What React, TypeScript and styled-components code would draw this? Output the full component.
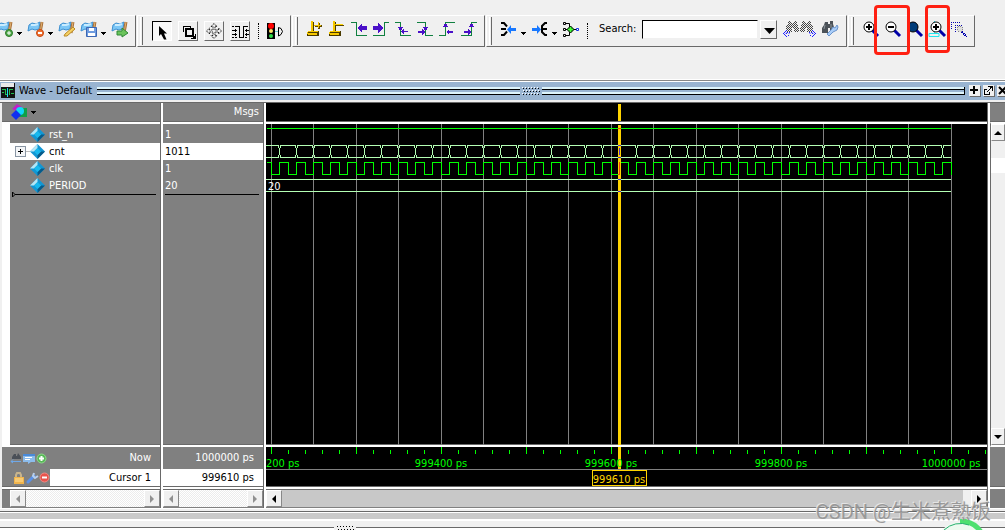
import React from 'react';
import styled, { createGlobalStyle, css } from 'styled-components';

const GlobalStyle = createGlobalStyle`
  * { box-sizing: border-box; }
  body {
    margin: 0;
    background: #f0f0f0;
    font: 11px/16px "DejaVu Sans Condensed", "Noto Sans", "Noto Sans CJK SC", sans-serif;
    color: #000;
  }
  button, input { font: inherit; color: inherit; border-radius: 0; }
  svg { display: block; }
`;

const Page = styled.main`
  position: relative;
  display: flex;
  flex-direction: column;
  height: 100vh;
  overflow: hidden;
  background: #f0f0f0;
`;

/* ---------- toolbar ---------- */

const ToolbarArea = styled.header`
  display: flex;
  flex: none;
  gap: 1px;
  height: 79px;
  padding-top: 15px;
  overflow: hidden;
`;

const Group = styled.div<{ $cut?: boolean }>`
  display: flex;
  flex: none;
  align-items: flex-start;
  gap: 6px;
  height: 32px;
  padding: 5px 7px 0 0;
  border: solid;
  border-width: 1px;
  border-color: #fff #696969 #696969 #fff;
  ${(p) => p.$cut && css`margin-left: -4px;`}
`;

const Grip = styled.span`
  width: 3px;
  height: 28px;
  margin: -4px 3px 0 2px;
  border-left: 1px solid #fff;
  border-right: 1px solid #696969;
`;

const ToolButton = styled.button`
  display: block;
  flex: none;
  padding: 0;
  border: 0;
  background: none;
`;

const BoxButton = styled(ToolButton)<{ $on?: boolean }>`
  width: 20px;
  height: 20px;
  border: 1px solid;
  border-color: ${(p) => (p.$on ? '#000 #fff #fff #000' : '#fff #696969 #696969 #fff')};
  background: ${(p) => (p.$on ? '#f8f8f8' : '#f0f0f0')};
`;

const Split = styled.span<{ $gap?: number }>`
  display: flex;
  gap: ${(p) => p.$gap ?? 4}px;
`;

const ArrowButton = styled(ToolButton)`
  padding-top: 8px;
`;

const Dots = styled.span`
  width: 1px;
  height: 16px;
  margin: 2px 2px 0 2px;
  border-left: 1px dotted #000;
`;

const SearchBox = styled.div`
  display: flex;
  gap: 2px;
  margin: -1px 0 0 3px;
`;

const SearchLabel = styled.label`
  width: 41px;
  line-height: 17px;
`;

const SearchInput = styled.input`
  width: 116px;
  height: 19px;
  padding: 0 2px;
  border: 1px solid;
  border-color: #000 #f0f0f0 #f0f0f0 #000;
  background: #fff;
  outline: 0;
`;

const DropButton = styled(BoxButton)`
  width: 17px;
  height: 19px;
  padding: 3px 0 0 1px;
`;

const Mark = styled.div<{ $left: number; $width: number; $height: number }>`
  position: absolute;
  top: 5px;
  left: ${(p) => p.$left}px;
  width: ${(p) => p.$width}px;
  height: ${(p) => p.$height}px;
  border: 3px solid #ff2012;
  border-radius: 4px;
`;

/* ---------- window title ---------- */

const TitleBar = styled.div`
  display: flex;
  flex: none;
  align-items: center;
  height: 24px;
  padding: 0 0 1px 1px;
  border-top: 1px solid #fff;
  border-bottom: 1px solid #696969;
  background: linear-gradient(#888 0 1px, #fff 1px 2px, #99b4d1 2px 20px, #f0f0f0 20px);
`;

const TitleText = styled.h1`
  margin: 0 5px 0 4px;
  font: inherit;
  white-space: nowrap;
`;

const DragLines = styled.div`
  display: flex;
  flex: 1;
  justify-content: center;
  height: 8px;
  border-right: 1px solid #000;
  background: linear-gradient(#def4fb 0 2px, #000 2px 3px, #99b4d1 3px 5px, #def4fb 5px 7px, #000 7px 8px);
`;

const TitleButtons = styled.div`
  display: flex;
  gap: 3px;
  margin: 0 -3px 0 4px;
`;

const TitleButton = styled(ToolButton)`
  width: 11px;
  height: 11px;
  background: #f0f0f0;
  box-shadow: 1px 1px 0 #696969;
`;

/* ---------- wave window ---------- */

const Panes = styled.section`
  display: flex;
  flex: 1;
  min-height: 0;
  padding-left: 2px;
`;

const Pane = styled.div<{ $width?: number }>`
  display: flex;
  flex-direction: column;
  min-width: 0;
  ${(p) => (p.$width ? css`flex: none; width: ${p.$width}px;` : css`flex: 1;`)}
  border-right: 2px solid #fff;
  box-shadow: inset -1px 0 0 #696969;
  background: #808080;
  color: #fff;
`;

const PaneHead = styled.div<{ $black?: boolean }>`
  display: flex;
  flex: none;
  align-items: center;
  height: 19px;
  padding: 0 4px 0 9px;
  gap: 4px;
  margin-right: 1px;
  background: ${(p) => (p.$black ? '#000' : '#808080')};
  border-bottom: 1px solid #696969;
`;

const Msgs = styled.span`
  margin-left: auto;
`;

const List = styled.div<{ $gutter?: number; $black?: boolean }>`
  flex: 1;
  min-height: 0;
  margin-right: 1px;
  padding-top: ${(p) => (p.$black ? 0 : 2)}px;
  overflow: hidden;
  border-top: 2px solid #fff;
  border-bottom: 2px solid #fff;
  border-left: ${(p) => p.$gutter ?? 0}px solid #fff;
  background: ${(p) => (p.$black ? '#000' : '#808080')};
  box-shadow: inset 0 -1px 0 #696969;
`;

const Row = styled.div<{ $selected?: boolean; $indent?: number }>`
  display: flex;
  align-items: center;
  height: 17px;
  padding-left: ${(p) => p.$indent ?? 2}px;
  background: ${(p) => (p.$selected ? '#fff' : 'transparent')};
  color: ${(p) => (p.$selected ? '#000' : '#fff')};
`;

const Expander = styled.span`
  display: flex;
  align-items: center;
  width: 15px;
`;

const ExpandButton = styled(ToolButton)`
  width: 11px;
  height: 11px;
`;

const Dash = styled.span`
  flex: 1;
  height: 1px;
  background: #bbb;
`;

const SignalName = styled.span`
  margin-left: 4px;
`;

const EndLine = styled.div`
  height: 1px;
  margin: 0 4px 0 2px;
  background: #000;
`;

const EndMarker = styled.svg`
  margin-top: -4px;
  margin-left: 2px;
`;

const NowRow = styled.div`
  display: flex;
  flex: none;
  align-items: center;
  gap: 1px;
  height: 22px;
  padding: 0 10px 0 9px;
`;

const CursorRow = styled.div`
  display: flex;
  flex: none;
  height: 17px;
  margin-right: 1px;
`;

const CursorTools = styled.div`
  display: flex;
  align-items: center;
  gap: 1px;
  width: 48px;
  padding-left: 11px;
`;

const CursorField = styled.div`
  flex: 1;
  padding-right: 9px;
  background: #fff;
  color: #000;
  line-height: 17px;
  text-align: right;
`;

const RightText = styled.span`
  margin-left: auto;
`;

const ScrollRow = styled.div<{ $gutter?: number }>`
  display: flex;
  flex: none;
  height: 22px;
  padding-left: ${(p) => p.$gutter ?? 0}px;
  margin-right: 1px;
  border-top: 4px solid;
  border-image: linear-gradient(#696969 0 1px, #fff 1px 3px, #696969 3px) 4 0 0 0;
  border-bottom: 1px solid #696969;
`;

const ScrollButton = styled(ToolButton)`
  display: grid;
  place-items: center;
  width: 16px;
  border: 1px solid;
  border-color: #fff #888 #888 #fff;
  background: #f0f0f0;
`;

const ScrollTrack = styled.div<{ $full?: boolean }>`
  flex: 1;
  background: ${(p) =>
    p.$full ? '#c8c8c8' : 'repeating-conic-gradient(#fff 0 25%, #ececec 0 50%) 0 0 / 2px 2px'};
`;

const ScrollRest = styled.div`
  width: 8px;
  background: #f0f0f0;
`;

const WaveTimeline = styled.div`
  flex: none;
  height: 39px;
  margin-right: 1px;
  overflow: hidden;
  background: #000;
`;

const SidePane = styled.div`
  display: flex;
  flex-direction: column;
  width: 15px;
  background: #808080;
`;

const SideHead = styled.div`
  height: 19px;
  border-bottom: 1px solid #696969;
`;

const VScroll = styled.div`
  display: flex;
  flex: 1;
  flex-direction: column;
  border: solid #fff;
  border-width: 2px 0;
  border-left: 1px solid #696969;
  background: #f0f0f0;
`;

const VButton = styled(ScrollButton)`
  width: 14px;
  height: 17px;
`;

const VThumb = styled.div`
  height: 15px;
  margin-top: 17px;
  background: #fff;
`;

const VRest = styled.div`
  flex: 1;
`;

const SideFoot = styled.div`
  height: 61px;
  background: linear-gradient(#808080 0 39px, #696969 39px 40px, #fff 40px 42px, #808080 42px);
`;

const Chart = styled.svg`
  width: 100%;
  height: 100%;
  shape-rendering: crispEdges;
`;

/* ---------- bottom strip ---------- */

const Bottom = styled.footer`
  display: flex;
  flex: none;
  justify-content: center;
  height: 22px;
  padding: 17px 315px 0 0;
  background: linear-gradient(
    #fff 0 1px, #f0f0f0 1px 3px, #696969 3px 4px, #fff 4px 5px, #cacaca 5px 11px,
    #fff 11px 13px, #f0f0f0 13px 19px, #696969 19px 20px, #fff 20px
  );
`;

const Watermark = styled.div`
  position: absolute;
  right: 14px;
  bottom: 4px;
  color: #949494;
  font: 20px/28px Roboto, "Noto Sans CJK SC", sans-serif;
  text-shadow: -1px -1px 0 #e8e8e8;
  white-space: nowrap;
  opacity: 0.9;
`;

const Ball = styled.svg`
  position: absolute;
  right: 12px;
  bottom: 0;
`;

/* ---------- icons ---------- */

type IconProps = { children: React.ReactNode; crisp?: boolean; w?: number; h?: number };
const Icon = ({ children, crisp, w = 16, h = 16 }: IconProps) => (
  <svg width={w} height={h} viewBox={`0 0 ${w} ${h}`} fill="none" aria-hidden="true"
    shapeRendering={crisp ? 'crispEdges' : 'auto'} overflow="visible">
    {children}
  </svg>
);

const Caret = () => (
  <Icon w={5} h={3} crisp><path d="M0 0H5V1H4V2H3V3H2V2H1V1H0Z" fill="#000" /></Icon>
);

const FlagShape = () => (
  <>
    <path d="M1 4 4 2 8 3 12 1 11 8 7 9 4 8 0 10Z" fill="#7cc7f6" stroke="#3d8fd0" />
    <path d="M3 4 7 4 10 3" stroke="#c9ecff" strokeWidth="2" />
    <path d="M14 1 12 12" stroke="#a9713a" strokeWidth="3" />
    <path d="M14 1 12 12" stroke="#e0b070" />
  </>
);
const FlagAdd = () => (
  <Icon><FlagShape /><circle cx="12" cy="12" r="3.5" fill="#4fa848" stroke="#2d7a2b" /><path d="M10 12h4M12 10v4" stroke="#fff" /></Icon>
);
const FlagRemove = () => (
  <Icon><FlagShape /><circle cx="12" cy="12" r="3.5" fill="#f07030" stroke="#c84810" /><path d="M10 12h4" stroke="#fff" strokeWidth="2" /></Icon>
);
const FlagEdit = () => (
  <Icon><FlagShape /><path d="M14 6 6 13 5 15 8 15 16 8Z" fill="#f5cf62" stroke="#b98a28" /></Icon>
);
const FlagSave = () => (
  <Icon><FlagShape /><path d="M5.500 6.500h10v9h-10z" fill="#6f9ce0" stroke="#3c67b4" /><path d="M8 7h5v3h-5zM7 12h7v3h-7z" fill="#fff" /></Icon>
);
const FlagGo = () => (
  <Icon><FlagShape /><path d="M5 10H10V7L16 12L10 16V14H5Z" fill="#6cc45c" stroke="#2f8a36" /></Icon>
);

const PointerIcon = () => (
  <Icon w={18} h={18}><path d="M6 4V14L8 12 11 17.500H13.500L11 11.500H14Z" fill="#000" /></Icon>
);
const ZoomModeIcon = () => (
  <Icon w={18} h={18} crisp>
    <path d="M4 4H12V5H5V10H4ZM11 4H12V6H11Z" fill="#000" />
    <path d="M6 6H15V15H6ZM8 8V13H13V8Z" fill="#000" fillRule="evenodd" />
    <path d="M17 12V17H12V16H14V14H16V12Z" fill="#000" />
  </Icon>
);
const PanIcon = () => (
  <Icon w={18} h={18}>
    <path d="M9 1.500 12 4.500H10V8H13.500V6L16.500 9 13.500 12V10H10V13.500H12L9 16.500 6 13.500H8V10H4.500V12L1.500 9 4.500 6V8H8V4.500H6Z" stroke="#222" strokeDasharray="1.500 0.700" />
  </Icon>
);
const EditModeIcon = () => (
  <Icon w={18} h={18} crisp>
    <path d="M1 4H3V5H1ZM4 4H9V5H4ZM8 4H9V16H8ZM12 4H17V5H12ZM12 4H13V16H12ZM9 15H12V16H9ZM1 15H3V16H1ZM4 15H6V16H4ZM14 15H16V16H14Z" fill="#000" />
    <path d="M1 8H6V9H1ZM4 7H5V10H4ZM1 12H6V13H1ZM4 11H5V14H4ZM14 8H18V9H14ZM15 7H16V10H15ZM14 12H18V13H14ZM15 11H16V14H15Z" fill="#000" />
  </Icon>
);
const TrafficIcon = () => (
  <Icon>
    <path d="M0 2H8V18H0Z" fill="#000" />
    <circle cx="4" cy="5" r="3" fill="#f00" /><circle cx="4" cy="10" r="2" fill="#ffe36a" /><circle cx="4" cy="15" r="2" fill="#2fdc4a" />
    <path d="M11.500 6.500V15L14 13.500 15.500 10.500 14 7.500Z" stroke="#000" />
    <path d="M8 10.500h3" stroke="#6cc" />
  </Icon>
);

const CursorBase = () => (
  <>
    <path d="M1 10H12V15H0V11H1Z" fill="#4a3a00" />
    <path d="M1 10H11V11H1ZM0 11H1V13H0ZM1 12H10V14H1ZM4 0H6V10H4Z" fill="#f6c800" />
    <path d="M6 1H7V10H6Z" fill="#4a3a00" />
  </>
);
const AddCursorIcon = () => (
  <Icon crisp><CursorBase /><path d="M8 4H15V6H8ZM11 2H13V8H11Z" fill="#5a4600" /><path d="M7 4H14V5H7ZM11 1H12V7H11Z" fill="#f2c200" /></Icon>
);
const DelCursorIcon = () => (
  <Icon crisp><CursorBase /><path d="M7 4H15V5H7Z" fill="#5a4600" /><path d="M6 3H14V4H6Z" fill="#ffd400" /></Icon>
);

const PURPLE = '#4a10c8';
const Edge = ({ d, arrows }: { d: string; arrows: string }) => (
  <Icon crisp>
    <path d={d} fill="#108040" />
    <path d={arrows} fill={PURPLE} />
  </Icon>
);
const edges = [
  { name: 'Previous transition', d: 'M0 1H6V14H16V15H5V2H0Z', arrows: 'M6 7 11 2V5H16V9H11V12Z' },
  { name: 'Next transition', d: 'M0 14H11V1H16V2H12V15H0Z', arrows: 'M10 7 5 2V5H0V9H5V12Z' },
  { name: 'Previous falling edge', d: 'M0 1H6V14H16V15H5V2H0Z', arrows: 'M3 6H8V7H7V9H4V7H3ZM6 10 9 7V10H13V11H9V14Z' },
  { name: 'Next falling edge', d: 'M0 1H9V14H16V15H8V2H0Z', arrows: 'M6 6H11V7H10V9H7V7H6ZM8 11 5 8V10H1V12H5V14Z' },
  { name: 'Previous rising edge', d: 'M0 14H6V1H16V2H7V15H0Z', arrows: 'M4 6H9V5H8V3H5V5H4ZM7 11 10 8V10H14V12H10V14Z' },
  { name: 'Next rising edge', d: 'M0 14H10V1H16V2H11V15H0Z', arrows: 'M8 6H13V5H12V3H9V5H8ZM10 11 7 8V10H3V12H7V14Z' },
];

const DriversIcon = () => (
  <Icon>
    <path d="M0 2H3L6 5.500M0 8H5M0 14H3L6 10.500" stroke="#000" strokeWidth="2" />
    <path d="M6 8.500 10 4V7H15V10H10V13Z" fill="#1878ff" />
  </Icon>
);
const ReadersIcon = () => (
  <Icon>
    <path d="M15 2H13L10 5V11L13 14H15M10 8H15" stroke="#000" strokeWidth="2" />
    <path d="M9 8.500 5 4V7H0V10H5V13Z" fill="#1878ff" />
  </Icon>
);
const NetIcon = () => (
  <Icon>
    <path d="M0.500 1.500H2.500V3.500H0.500ZM0.500 7.500H2.500V9.500H0.500ZM0.500 13.500H2.500V15.500H0.500ZM3 2.500H6.500V6M3 8.500H13M3 14.500H6.500V11" stroke="#000" />
    <path d="M7.500 5 11 8.500 7.500 12 4 8.500Z" fill="#20c820" stroke="#000" /><path d="M5 8.500H10M7.500 6V11" stroke="#4cff3c" />
    <path d="M13.500 7.500H15.500V9.500H13.500Z" stroke="#1030e0" fill="#fff" />
  </Icon>
);
const Binocular = ({ flip }: { flip?: boolean }) => (
  <Icon crisp>
    <defs>
      <pattern id="stipple" width="2" height="2" patternUnits="userSpaceOnUse">
        <path d="M0 0H1V1H0ZM1 1H2V2H1Z" fill="#444" />
      </pattern>
    </defs>
    <g transform={flip ? 'translate(16 0) scale(-1 1)' : undefined}>
      <path d="M5 0H8V2H11V0H14V3L16 7V11H11V7H9V11H3V6L5 3Z" fill="url(#stipple)" />
      <path d="M0 12H1V13H0ZM1 11H2V12H1ZM2 10H3V11H2ZM3 9H4V10H3ZM4 11H5V12H4ZM6 11H7V12H6ZM1 13H2V14H1ZM2 14H3V15H2ZM3 15H4V16H3ZM5 14H6V15H5ZM3 12H4V13H3Z" fill="#2020ff" />
      <path d="M3 11H4V12H3ZM5 12H7V13H5ZM2 12H3V13H2Z" fill="#a8a8ff" />
    </g>
  </Icon>
);
const SearchOptionsIcon = () => (
  <Icon w={17}>
    <path d="M3 1H6V3H8V0H11V3L12 6V10H8V7H6V12H0V7L2 4Z" fill="#4c5258" />
    <path d="M3 4 2 8M9 3V7" stroke="#8d959c" />
    <path d="M15 4 13 7 11 6 9 9 5 13 7 15 11 11 15 9 16 6Z" fill="#a9cdf8" stroke="#6a94cc" />
  </Icon>
);

const Lens = ({ fill = '#fff' }: { fill?: string }) => (
  <>
    <path d="M9 9 15 15" stroke="#0000a8" strokeWidth="3" />
    <circle cx="6" cy="6" r="5" fill={fill} stroke="#000" />
  </>
);
const ZoomInIcon = () => <Icon><Lens /><path d="M3 6H9M6 3V9" stroke="#000" strokeWidth="2" /></Icon>;
const ZoomOutIcon = () => <Icon><Lens /><path d="M3 6H9" stroke="#000" strokeWidth="2" /></Icon>;
const ZoomFullIcon = () => <Icon><Lens fill="#003c78" /></Icon>;
const ZoomCursorIcon = () => (
  <Icon><path d="M0 12.500H10V15.500H0ZM5.500 0V12" stroke="#20e8f0" /><g transform="translate(1 0)"><Lens /><path d="M3 6H9M6 3V9" stroke="#000" strokeWidth="2" /></g></Icon>
);
const ZoomRangeIcon = () => (
  <Icon crisp>
    <path d="M0 1H9M0 1V9M4 4H12M4 4V12" stroke="#0000b0" strokeDasharray="1 1" />
    <circle cx="9" cy="8" r="3" fill="#ddd" stroke="#888" strokeDasharray="1 1" />
    <path d="M11 11 16 16" stroke="#0000b0" strokeWidth="2" strokeDasharray="1 1" />
  </Icon>
);

const WaveIcon = () => (
  <Icon w={14} h={15} crisp>
    <path d="M0 0H14V15H0Z" fill="#111" /><path d="M0 0H13V4H0Z" fill="#e8e8e8" />
    <path d="M1 6H5V11H7V12H4V7H1ZM8 6H12V7H9V12H8ZM10 10H13V11H10ZM1 9H3V10H1Z" fill="#20c050" /><path d="M6 5H7V14H6Z" fill="#20d8f0" />
  </Icon>
);
const ShapesIcon = () => (
  <Icon>
    <path d="M1 5 6 0 11 3 6 7Z" fill="#c020c8" /><path d="M9 4H16V13H8Z" fill="#10a048" />
    <circle cx="9" cy="7" r="4" fill="#10d8f8" /><path d="M5 6 10 11 5 16 0 11Z" fill="#1030f0" />
  </Icon>
);
const Diamond = () => (
  <Icon w={15} h={15}>
    <path d="M7.500 0 15 7.500 7.500 15 0 7.500Z" fill="#1297d4" />
    <path d="M7.500 0V4L4 7.500H0Z" fill="#b5e6f5" /><path d="M7.500 15V11L11 7.500H15Z" fill="#085a88" />
    <path d="M7.500 4 11 7.500 7.500 11 4 7.500Z" fill="#17b9ee" />
  </Icon>
);
const PlusBox = () => (
  <Icon w={11} h={11} crisp>
    <path d="M0 0H11V11H0Z" fill="#8a96a4" /><path d="M1 1H10V10H1Z" fill="#f4f6f8" /><path d="M3 5H8V6H3ZM5 3H6V8H5Z" fill="#000" />
  </Icon>
);
const SmallFind = () => (
  <Icon w={11} h={12}><path d="M1 5 3 2H5V4H6L7 1 10 5V7H1Z" fill="#4a4f57" /><path d="M0 9.500H10M2 7.500 0 9.500 2 11" stroke="#6fa8e8" /></Icon>
);
const SmallNote = () => (
  <Icon w={12} h={12}><path d="M0 2H12V10H8L5 12V10H0Z" fill="#8cbcec" /><path d="M0 2H12V4H0Z" fill="#4a8ad8" /><path d="M2 5.500H9M2 7.500H7" stroke="#fff" /></Icon>
);
const SmallRound = ({ minus }: { minus?: boolean }) => (
  <Icon w={11} h={11}>
    <circle cx="5.500" cy="5.500" r="4.500" fill={minus ? '#e8534c' : '#58b858'} stroke={minus ? '#f08a84' : '#8ed88a'} />
    <path d={minus ? 'M3 5.500H8' : 'M3 5.500H8M5.500 3V8'} stroke="#fff" strokeWidth="2" />
  </Icon>
);
const SmallLock = () => (
  <Icon w={12} h={12}><path d="M3 6V3L4 1H7L8 3V6" stroke="#c8b48c" strokeWidth="2" /><path d="M1 5H11V12H1Z" fill="#f0b44c" /><path d="M2 7H10M2 9H10" stroke="#ffe09a" /></Icon>
);
const SmallWrench = () => (
  <Icon w={12} h={12}><path d="M2 10 8 4" stroke="#5a92e8" strokeWidth="3" strokeLinecap="round" /><path d="M8 1 7 4 9 6 12 4" stroke="#b8d0ee" strokeWidth="2" /></Icon>
);

type Dir = 'left' | 'right' | 'up' | 'down';
const triangles: Record<Dir, string> = {
  left: 'M6 0V8L2 4Z', right: 'M2 0V8L6 4Z', up: 'M0 6H8L4 2Z', down: 'M0 2H8L4 6Z',
};
const Triangle = ({ dir, dim }: { dir: Dir; dim?: boolean }) => (
  <Icon w={8} h={8}><path d={triangles[dir]} fill={dim ? '#909090' : '#000'} /></Icon>
);

const DragDots = ({ back, light }: { back: string; light?: boolean }) => (
  <Icon w={22} h={8} crisp>
    <path d="M0 0H22V8H0Z" fill={back} />
    {[0, 1, 2].flatMap((row) => [0, 1, 2, 3, 4, 5].map((i) => {
      const x = 2 + i * 3 + (row % 2);
      const y = 1 + row * 3;
      return (
        <React.Fragment key={`${row}-${i}`}>
          {light && <rect x={x} y={y - 1} width="1" height="1" fill="#fff" />}
          <rect x={x + 1} y={y} width="1" height="1" fill="#000" />
        </React.Fragment>
      );
    }))}
  </Icon>
);

/* ---------- chart data ---------- */

const END = 685;
const CURSOR = 352;
const CYCLE = 17;
const GREEN = '#00ff00';
const PALE = '#b4ffb4';
const cycles = Array.from({ length: 40 }, (_, i) => 13 + i * CYCLE);
const grid = Array.from({ length: 17 }, (_, i) => 5 + Math.floor(i * 42.5));
const ticks = Array.from({ length: 43 }, (_, i) => 5 + i * CYCLE);
const labels = [
  { x: 175, text: '999400 ps' },
  { x: 345, text: '999600 ps' },
  { x: 515, text: '999800 ps' },
  { x: 685, text: '1000000 ps' },
];

const Waves = () => (
  <Chart role="img" aria-label="Signal waveforms">
    {grid.map((x) => <rect key={x} x={x} width="1" height="100%" fill="#808080" />)}
    <rect x="1" y="4" width={END - 1} height="1" fill={GREEN} />
    <g fill={PALE}>
      <rect y="21" width={END} height="1" /><rect y="33" width={END} height="1" />
      <rect y="55" width={END} height="1" /><rect y="67" width={END} height="1" />
      {cycles.map((x) => (
        <path key={x} d={`M${x - 1} 21h1v3h-1zM${x + 1} 21h1v3h-1zM${x} 24h1v7h-1zM${x - 1} 31h1v3h-1zM${x + 1} 31h1v3h-1z`} />
      ))}
    </g>
    {cycles.map((x) => <path key={x} d={`M${x} 21h1v1h-1zM${x} 33h1v1h-1z`} fill="#000" />)}
    <g fill={GREEN}>
      <path d="M1 38h5v12h8v1h-9v-12h-4z" />
      {cycles.map((x, i) => (
        <path key={x} d={i === 39 ? `M${x} 38h10v13h-1v-12h-8v12h-1z` : `M${x} 38h10v12h7v1h-8v-12h-8v12h-1z`} />
      ))}
    </g>
    <text x="2" y="66" fill="#fff">20</text>
    <rect x={CURSOR} y="1" width="3" height="100%" fill="#ffd400" />
    <path d="M352 21h3v1h-3zM352 33h3v1h-3zM353 24h1v7h-1zM352 55h3v1h-3zM352 67h3v1h-3z" fill="#4a2ad0" />
    <path d="M352 4h3v1h-3zM352 50h1v1h-1zM353 38h1v13h-1z" fill="#f04010" />
  </Chart>
);

const Timeline = () => (
  <Chart role="img" aria-label="Time axis in picoseconds">
    {ticks.map((x, i) => (
      <rect key={x} x={x} y={i % 5 ? 3 : 0} width="1" height={i % 5 ? 4 : 7} fill={GREEN} />
    ))}
    <rect x={CURSOR} width="3" height="22" fill="#ffd400" />
    <text x="0" y="20" fill={GREEN}>200 ps</text>
    {labels.map((l) => <text key={l.x} x={l.x} y="20" textAnchor="middle" fill={GREEN}>{l.text}</text>)}
    <rect y="22" width="100%" height="1" fill="#808080" />
    <rect x="326" y="23" width="55" height="16" fill="#ffd400" />
    <rect x="327" y="24" width="53" height="14" fill="#000" />
    <text x="353" y="36" textAnchor="middle" fill="#ffd400">999610 ps</text>
  </Chart>
);

const signals = [
  { name: 'rst_n', value: '1' },
  { name: 'cnt', value: '1011', selected: true },
  { name: 'clk', value: '1' },
  { name: 'PERIOD', value: '20' },
];

const Tool = ({ name, icon }: { name: string; icon: React.ReactNode }) => (
  <ToolButton type="button" aria-label={name}>{icon}</ToolButton>
);
const SplitTool = ({ name, icon }: { name: string; icon: React.ReactNode }) => (
  <Split>
    <Tool name={name} icon={icon} />
    <ArrowButton type="button" aria-label={`${name} options`}><Caret /></ArrowButton>
  </Split>
);

const HScroll = ({ gutter }: { gutter?: number }) => (
  <ScrollRow $gutter={gutter}>
    <ScrollButton type="button" aria-label="Scroll left"><Triangle dir="left" dim /></ScrollButton>
    <ScrollTrack />
    <ScrollButton type="button" aria-label="Scroll right"><Triangle dir="right" dim /></ScrollButton>
  </ScrollRow>
);

export default function App() {
  return (
    <Page>
      <GlobalStyle />
      <ToolbarArea>
        <Group $cut>
          <SplitTool name="Add bookmark" icon={<FlagAdd />} />
          <SplitTool name="Remove bookmark" icon={<FlagRemove />} />
          <Tool name="Edit bookmark" icon={<FlagEdit />} />
          <SplitTool name="Save bookmark" icon={<FlagSave />} />
          <Tool name="Go to bookmark" icon={<FlagGo />} />
        </Group>
        <Group>
          <Grip />
          <BoxButton $on type="button" aria-label="Select mode"><PointerIcon /></BoxButton>
          <BoxButton type="button" aria-label="Zoom mode"><ZoomModeIcon /></BoxButton>
          <BoxButton type="button" aria-label="Pan mode"><PanIcon /></BoxButton>
          <BoxButton type="button" aria-label="Edit mode"><EditModeIcon /></BoxButton>
          <Dots />
          <Tool name="Stop drawing" icon={<TrafficIcon />} />
        </Group>
        <Group>
          <Grip />
          <Tool name="Insert cursor" icon={<AddCursorIcon />} />
          <Tool name="Delete cursor" icon={<DelCursorIcon />} />
          {edges.map((e) => (
            <Tool key={e.name} name={e.name} icon={<Edge d={e.d} arrows={e.arrows} />} />
          ))}
        </Group>
        <Group>
          <Grip />
          <SplitTool name="Show drivers" icon={<DriversIcon />} />
          <SplitTool name="Show readers" icon={<ReadersIcon />} />
          <Tool name="Expand net" icon={<NetIcon />} />
          <Dots />
          <SearchBox>
            <SearchLabel htmlFor="search">Search:</SearchLabel>
            <SearchInput id="search" type="text" />
            <DropButton type="button" aria-label="Search history">
              <Icon w={14} h={12}><path d="M2 3H13L7.500 9Z" fill="#000" /></Icon>
            </DropButton>
          </SearchBox>
          <Split $gap={1}>
            <Tool name="Find previous" icon={<Binocular />} />
            <Tool name="Find next" icon={<Binocular flip />} />
          </Split>
          <Tool name="Search options" icon={<SearchOptionsIcon />} />
        </Group>
        <Group>
          <Grip />
          <Tool name="Zoom in" icon={<ZoomInIcon />} />
          <Tool name="Zoom out" icon={<ZoomOutIcon />} />
          <Tool name="Zoom full" icon={<ZoomFullIcon />} />
          <Tool name="Zoom in on cursor" icon={<ZoomCursorIcon />} />
          <Tool name="Zoom range" icon={<ZoomRangeIcon />} />
        </Group>
      </ToolbarArea>
      <Mark $left={874} $width={36} $height={50} />
      <Mark $left={925} $width={25} $height={48} />

      <TitleBar>
        <WaveIcon />
        <TitleText>Wave - Default</TitleText>
        <DragLines><DragDots back="#99b4d1" light /></DragLines>
        <TitleButtons>
          <TitleButton type="button" aria-label="Zoom window">
            <Icon w={11} h={11} crisp><path d="M1 4H9V6H1ZM4 1H6V9H4Z" fill="#000" /></Icon>
          </TitleButton>
          <TitleButton type="button" aria-label="Undock">
            <Icon w={11} h={11} crisp><path d="M1 4H4V5H2V9H6V7H7V10H1ZM5 1H10V6H9V3H8V4H7V5H6V6H5V7H4V6H5V5H6V4H7V2H5Z" fill="#000" /></Icon>
          </TitleButton>
          <TitleButton type="button" aria-label="Close">
            <Icon w={11} h={11}><path d="M2 2 9 9M9 2 2 9" stroke="#000" strokeWidth="2" /></Icon>
          </TitleButton>
        </TitleButtons>
      </TitleBar>

      <Panes>
        <Pane $width={161}>
          <PaneHead><ShapesIcon /><ToolButton type="button" aria-label="Columns"><Caret /></ToolButton></PaneHead>
          <List $gutter={8}>
            {signals.map((s) => (
              <Row key={s.name} $selected={s.selected} $indent={5}>
                <Expander>
                  {s.selected && <><ExpandButton type="button" aria-label="Expand cnt"><PlusBox /></ExpandButton><Dash /></>}
                </Expander>
                <Diamond />
                <SignalName>{s.name}</SignalName>
              </Row>
            ))}
            <EndLine />
            <EndMarker width="4" height="7" viewBox="0 0 4 7"><path d="M0.500 1V6L3 3.500Z" fill="#808080" stroke="#000" /></EndMarker>
          </List>
          <NowRow><SmallFind /><SmallNote /><SmallRound /><RightText>Now</RightText></NowRow>
          <CursorRow>
            <CursorTools><SmallLock /><SmallWrench /><SmallRound minus /></CursorTools>
            <CursorField>Cursor 1</CursorField>
          </CursorRow>
          <HScroll gutter={8} />
        </Pane>

        <Pane $width={103}>
          <PaneHead><Msgs>Msgs</Msgs></PaneHead>
          <List>
            {signals.map((s) => <Row key={s.name} $selected={s.selected}>{s.value}</Row>)}
            <EndLine />
          </List>
          <NowRow><RightText>1000000 ps</RightText></NowRow>
          <CursorRow><CursorField>999610 ps</CursorField></CursorRow>
          <HScroll />
        </Pane>

        <Pane>
          <PaneHead $black>
            <Chart><rect x={CURSOR - 9} y="1" width="3" height="100%" fill="#ffd400" /></Chart>
          </PaneHead>
          <List $black><Waves /></List>
          <WaveTimeline><Timeline /></WaveTimeline>
          <ScrollRow>
            <ScrollButton type="button" aria-label="Scroll left"><Triangle dir="left" /></ScrollButton>
            <ScrollTrack $full />
            <ScrollRest />
            <ScrollButton type="button" aria-label="Scroll right"><Triangle dir="right" /></ScrollButton>
          </ScrollRow>
        </Pane>

        <SidePane>
          <SideHead />
          <VScroll>
            <VButton type="button" aria-label="Scroll up"><Triangle dir="up" /></VButton>
            <VThumb />
            <VRest />
            <VButton type="button" aria-label="Scroll down"><Triangle dir="down" /></VButton>
          </VScroll>
          <SideFoot />
        </SidePane>
      </Panes>

      <Bottom><DragDots back="#f0f0f0" /></Bottom>
      <Ball width="60" height="11" viewBox="0 0 60 11">
        <circle cx="27" cy="27" r="24" fill="#eefaf0" />
        <path d="M27 2A25 25 0 0 1 48 13" stroke="#4fe070" strokeWidth="5" fill="none" />
        <path d="M11 11A24 24 0 0 1 36 6" stroke="#28b070" fill="none" />
      </Ball>
      <Watermark>CSDN @生米煮熟饭</Watermark>
    </Page>
  );
}
